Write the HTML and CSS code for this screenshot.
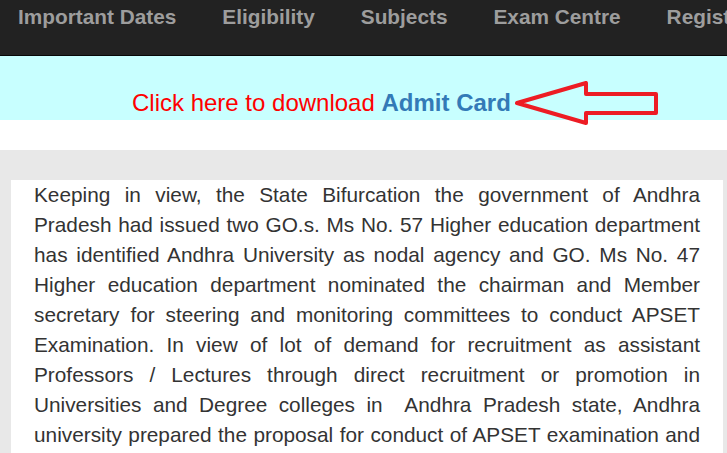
FILE: index.html
```html
<!DOCTYPE html>
<html>
<head>
<meta charset="utf-8">
<link rel="stylesheet" href="styles.css">
</head>
<body>
<nav class="nav">
  <a class="nav-item">Important Dates</a>
  <a class="nav-item">Eligibility</a>
  <a class="nav-item">Subjects</a>
  <a class="nav-item">Exam Centre</a>
  <a class="nav-item">Registration</a>
  <a class="nav-item">Contact</a>
</nav>
<div class="notice">
  <span class="notice-text">Click here to download <a class="admit">Admit Card</a></span>
  <svg class="arrow" width="144" height="45" viewBox="0 0 144 45">
    <polygon points="2,22 71,2 71,13 141,13 141,32 71,32 71,42" fill="none" stroke="#ed1c24" stroke-width="4" stroke-linejoin="round"/>
  </svg>
</div>
<div class="spacer"></div>
<main class="content">
  <div class="box">
    <p class="para">Keeping in view, the State Bifurcation the government of Andhra Pradesh had issued two GO.s. Ms No. 57 Higher education department has identified Andhra University as nodal agency and GO. Ms No. 47 Higher education department nominated the chairman and Member secretary for steering and monitoring committees to conduct APSET Examination. In view of lot of demand for recruitment as assistant Professors / Lectures through direct recruitment or promotion in Universities and Degree colleges in&nbsp; Andhra Pradesh state, Andhra university prepared the proposal for conduct of APSET examination and submitted to the Government for approval and the same was accepted by the Government.</p>
  </div>
</main>
</body>
</html>
```
FILE: styles.css
```css
html, body {
  margin: 0;
  padding: 0;
  overflow: hidden;
  background: #ffffff;
  font-family: "Liberation Sans", Arial, sans-serif;
}
.nav {
  display: flex;
  gap: 46px;
  height: 56px;
  box-sizing: border-box;
  padding: 5px 0 0 18px;
  background: #222222;
  border-bottom: 1px solid #080808;
  white-space: nowrap;
  overflow: hidden;
}
.nav-item {
  font-size: 20.8px;
  line-height: 24px;
  font-weight: bold;
  color: #9d9d9d;
  flex-shrink: 0;
}
.notice {
  display: flex;
  align-items: flex-start;
  height: 64px;
  box-sizing: border-box;
  padding: 25px 0 0 132px;
  background: #c8ffff;
}
.notice-text {
  margin-top: 7px;
  font-size: 24px;
  line-height: 30px;
  color: #ff0000;
  white-space: nowrap;
}
.admit {
  color: #337ab7;
  font-weight: bold;
}
.arrow {
  display: block;
  margin-left: 4px;
  flex-shrink: 0;
  position: relative;
}
.spacer {
  height: 30px;
  background: #ffffff;
}
.content {
  background: #e8e8e8;
  padding: 30px 4px 0 11px;
}
.box {
  background: #ffffff;
  padding: 0 23px;
}
.para {
  margin: 0;
  font-size: 20.8px;
  line-height: 30px;
  color: #333333;
  text-align: justify;
}
```
